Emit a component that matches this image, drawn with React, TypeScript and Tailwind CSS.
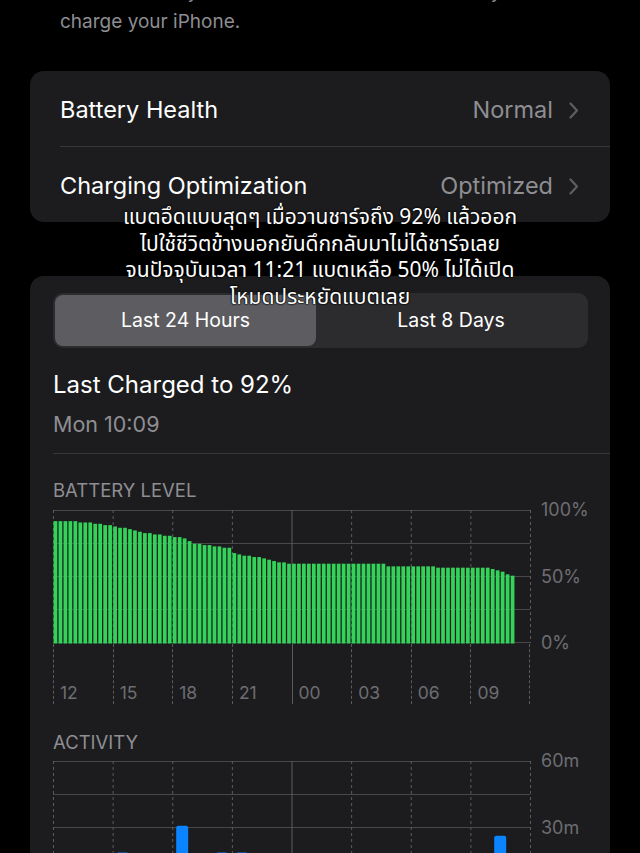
import React from "react";

// battery level keypoints: [bar index, percent]
const levelPoints: [number, number][] = [
  [0, 92], [3, 92], [6, 91], [10, 89], [12, 88], [16, 85], [18, 83], [24, 80],
  [26, 79], [28, 75], [32, 73], [35, 72], [36, 68], [38, 66], [42, 64], [45, 61],
  [48, 60], [66, 60], [67, 58], [86, 57], [88, 56], [90, 54], [91, 52], [92, 51],
];

function levelAt(i: number) {
  for (let k = 0; k < levelPoints.length - 1; k++) {
    const [a, va] = levelPoints[k];
    const [b, vb] = levelPoints[k + 1];
    if (i >= a && i <= b) return va + ((vb - va) * (i - a)) / (b - a);
  }
  return 51;
}

const levels = Array.from({ length: 93 }, (_, i) => Math.round(levelAt(i)));

// minutes of activity per hour slot (visible ones only)
const activity: Record<number, number> = { 3: 19, 6: 31, 8: 19, 9: 19, 22: 26.5 };

const W = 477;
const H = 133;
const COL = W / 8;
const hours = ["12", "15", "18", "21", "00", "03", "06", "09"];

function Grid() {
  return (
    <>
      {[0, 1, 2, 3, 4].map((r) => (
        <line key={r} x1={0} x2={W} y1={0.5 + r * 33} y2={0.5 + r * 33} stroke="#48484b" strokeWidth={1} />
      ))}
      {Array.from({ length: 9 }, (_, c) => (
        <line
          key={c}
          x1={c * COL + 0.5}
          x2={c * COL + 0.5}
          y1={0}
          y2={H}
          stroke="#5c5c5f"
          strokeWidth={1}
          strokeDasharray={c === 4 ? undefined : "3 3"}
        />
      ))}
    </>
  );
}

function Chevron() {
  return (
    <svg width="10" height="17" viewBox="0 0 10 17" fill="none">
      <path d="M1.5 1.5L8 8.5L1.5 15.5" stroke="#5d5d62" strokeWidth="2.2" strokeLinecap="round" strokeLinejoin="round" />
    </svg>
  );
}

function Row({ label, value }: { label: string; value: string }) {
  return (
    <div className="flex h-[75px] items-center pl-[30px] pr-[31px] pt-[3px]">
      <span className="flex-1 text-[23.5px] text-white">{label}</span>
      <span className="mr-[16px] text-[23.5px] text-[#8e8e93]">{value}</span>
      <Chevron />
    </div>
  );
}

function AxisLabels({ labels }: { labels: string[] }) {
  return (
    <div className="-my-[11px] ml-[10px] flex h-[155px] flex-col justify-between text-[18px] leading-[22px] text-[#6d6d72]">
      {labels.map((l) => (
        <span key={l}>{l}</span>
      ))}
    </div>
  );
}

function HourRow() {
  return (
    <div className="grid w-[477px] grid-cols-8">
      {hours.map((h, i) => (
        <div
          key={h}
          className={
            "h-[60px] border-l border-[#5c5c5f] pl-[6px] pt-[38px] text-[17.5px] leading-[22px] text-[#6d6d72] " +
            (i === 4 ? "border-solid " : "border-dashed ") +
            (i === 7 ? "border-r border-r-[#5c5c5f]" : "")
          }
        >
          {h}
        </div>
      ))}
    </div>
  );
}

export default function App() {
  return (
    <div
      className="relative h-[853px] w-[640px] overflow-hidden bg-black"
      style={{ fontFamily: "Inter, 'Noto Sans', sans-serif" }}
    >
      <div className="-mt-[21px] px-[60px] text-[19px] text-[#8d8d92]">
        <p className="whitespace-nowrap leading-[26px]">iPhone learns your routine so it can finish when you need it and</p>
        <p className="leading-[34px]">charge your iPhone.</p>
      </div>

      <div className="mx-[30px] mt-[32px] overflow-hidden rounded-[14px] bg-[#1c1c1e]">
        <Row label="Battery Health" value="Normal" />
        <div className="ml-[30px] h-px bg-[#38383a]" />
        <Row label="Charging Optimization" value="Optimized" />
      </div>

      <div className="mx-[30px] mt-[54px] rounded-[14px] bg-[#1c1c1e] pb-[40px] pl-[23px] pt-[17px]">
        <div className="mr-[22px] flex h-[55px] rounded-[10px] bg-[#2c2c2f] p-[2px] text-[19.5px] text-white">
          <div className="flex w-[261px] items-center justify-center rounded-[8px] bg-[#5d5d61]">Last 24 Hours</div>
          <div className="flex flex-1 items-center justify-center">Last 8 Days</div>
        </div>

        <p className="mt-[23px] text-[24px] leading-[28px] text-white">Last Charged to 92%</p>
        <p className="mt-[12px] text-[21.5px] leading-[26px] text-[#8e8e93]">Mon 10:09</p>
        <div className="mt-[16px] h-px bg-[#38383a]" />

        <p className="mt-[25px] text-[18.5px] leading-[22px] text-[#8e8e93]">BATTERY LEVEL</p>
        <div className="mt-[9px] flex">
          <svg width={W + 1} height={H + 1} className="block">
            <Grid />
            {levels.map((v, i) => {
              const h = (v / 100) * H;
              return <rect key={i} x={i * (COL / 12) + 0.6} y={H - h + 0.5} width={3.7} height={h} fill="#33d35a" />;
            })}
          </svg>
          <AxisLabels labels={["100%", "50%", "0%"]} />
        </div>
        <HourRow />

        <p className="mt-[27px] text-[18.5px] leading-[22px] text-[#8e8e93]">ACTIVITY</p>
        <div className="mt-[8px] flex">
          <svg width={W + 1} height={H + 1} className="block">
            <Grid />
            {Object.entries(activity).map(([slot, m]) => {
              const h = (m / 60) * H;
              const x = (Number(slot) + 0.5) * (W / 24) - 6;
              return <rect key={slot} x={x} y={H - h + 0.5} width={12} height={h} rx={2} fill="#0a84ff" />;
            })}
          </svg>
          <AxisLabels labels={["60m", "30m", "0m"]} />
        </div>
      </div>

      {/* caption laid over the screenshot */}
      <div
        className="absolute left-0 right-0 top-[205px] text-center text-[21px] leading-[26.5px] text-white [text-shadow:0_0_2px_#000,0_0_2px_#000,0_0_1px_#000]"
        style={{ fontFamily: "'Noto Sans Thai', 'Noto Sans', 'DejaVu Sans', sans-serif" }}
      >
        <p>แบตอึดแบบสุดๆ เมื่อวานชาร์จถึง 92% แล้วออก</p>
        <p>ไปใช้ชีวิตข้างนอกยันดึกกลับมาไม่ได้ชาร์จเลย</p>
        <p>จนปัจจุบันเวลา 11:21 แบตเหลือ 50% ไม่ได้เปิด</p>
        <p>โหมดประหยัดแบตเลย</p>
      </div>
    </div>
  );
}
